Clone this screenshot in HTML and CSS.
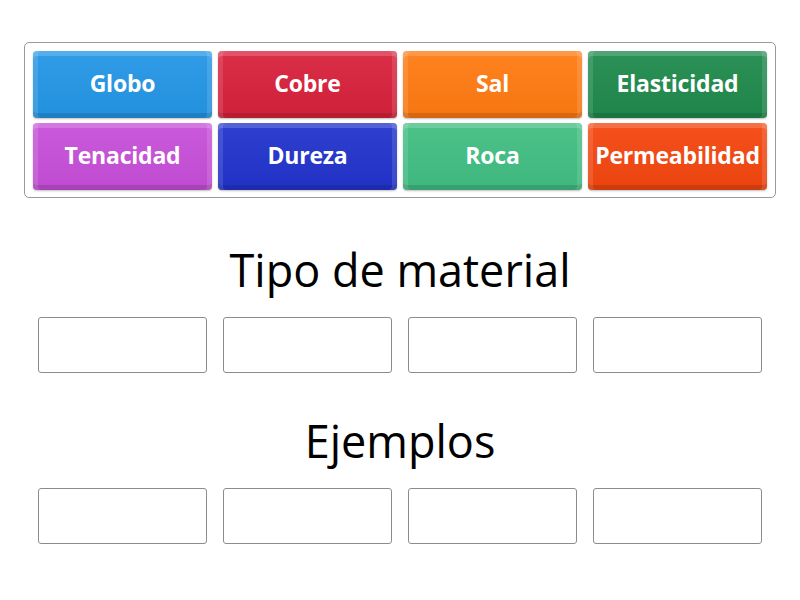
FILE: index.html
```html
<!DOCTYPE html>
<html lang="es">
<head>
<meta charset="utf-8">
<title>Grupo</title>
<link rel="stylesheet" href="styles.css">
</head>
<body>
<div class="bank">
  <div class="tile c-globo">Globo</div>
  <div class="tile c-cobre">Cobre</div>
  <div class="tile c-sal">Sal</div>
  <div class="tile c-elast">Elasticidad</div>
  <div class="tile c-tenac">Tenacidad</div>
  <div class="tile c-dureza">Dureza</div>
  <div class="tile c-roca">Roca</div>
  <div class="tile c-perm">Permeabilidad</div>
</div>
<section class="group first">
  <h2 class="group-title">Tipo de material</h2>
  <div class="slots">
    <div class="slot"></div><div class="slot"></div><div class="slot"></div><div class="slot"></div>
  </div>
</section>
<section class="group">
  <h2 class="group-title">Ejemplos</h2>
  <div class="slots">
    <div class="slot"></div><div class="slot"></div><div class="slot"></div><div class="slot"></div>
  </div>
</section>
</body>
</html>
```
FILE: styles.css
```css
html, body {
  margin: 0;
  padding: 0;
  background: #fff;
  font-family: "Open Sans", "Noto Sans", sans-serif;
  color: #000;
}
.bank {
  margin: 42px 24px 0;
  border: 1px solid #9a9a9a;
  border-radius: 5px;
  padding: 8px 8px 7px;
  display: grid;
  grid-template-columns: repeat(4, 1fr);
  grid-auto-rows: 67px;
  column-gap: 6px;
  row-gap: 5px;
}
.tile {
  border-radius: 4px;
  display: flex;
  align-items: center;
  justify-content: center;
  color: #fff;
  font-weight: 700;
  font-size: 23px;
  letter-spacing: -0.2px;
  white-space: nowrap;
  padding-bottom: 4px;
  box-sizing: border-box;
  background-image: linear-gradient(to bottom, rgba(255,255,255,0.06), rgba(0,0,0,0.04));
  box-shadow:
    inset 0 5px 0 rgba(255,255,255,0.18),
    inset 5px 0 0 rgba(255,255,255,0.12),
    inset -5px 0 0 rgba(255,255,255,0.12),
    inset 0 -5px 0 rgba(0,0,0,0.12),
    0 1px 2px rgba(0,0,0,0.25);
}
.c-globo { background-color: #2496e6; }
.c-cobre { background-color: #d8213c; }
.c-sal { background-color: #ff7b12; }
.c-elast { background-color: #1f8a4c; }
.c-tenac { background-color: #c74fd9; }
.c-dureza { background-color: #2233cc; }
.c-roca { background-color: #41be82; }
.c-perm { background-color: #f4460f; }

.group { padding-top: 38px; }
.group.first { padding-top: 42px; }
.group-title {
  margin: 0 0 17px;
  text-align: center;
  font-weight: 400;
  font-size: 45px;
  line-height: 60px;
}
.slots {
  display: grid;
  grid-template-columns: repeat(4, 169px);
  column-gap: 16px;
  justify-content: center;
}
.slot {
  height: 54px;
  border: 1px solid #8c8c8c;
  border-radius: 3px;
  background: #fff;
}
```
